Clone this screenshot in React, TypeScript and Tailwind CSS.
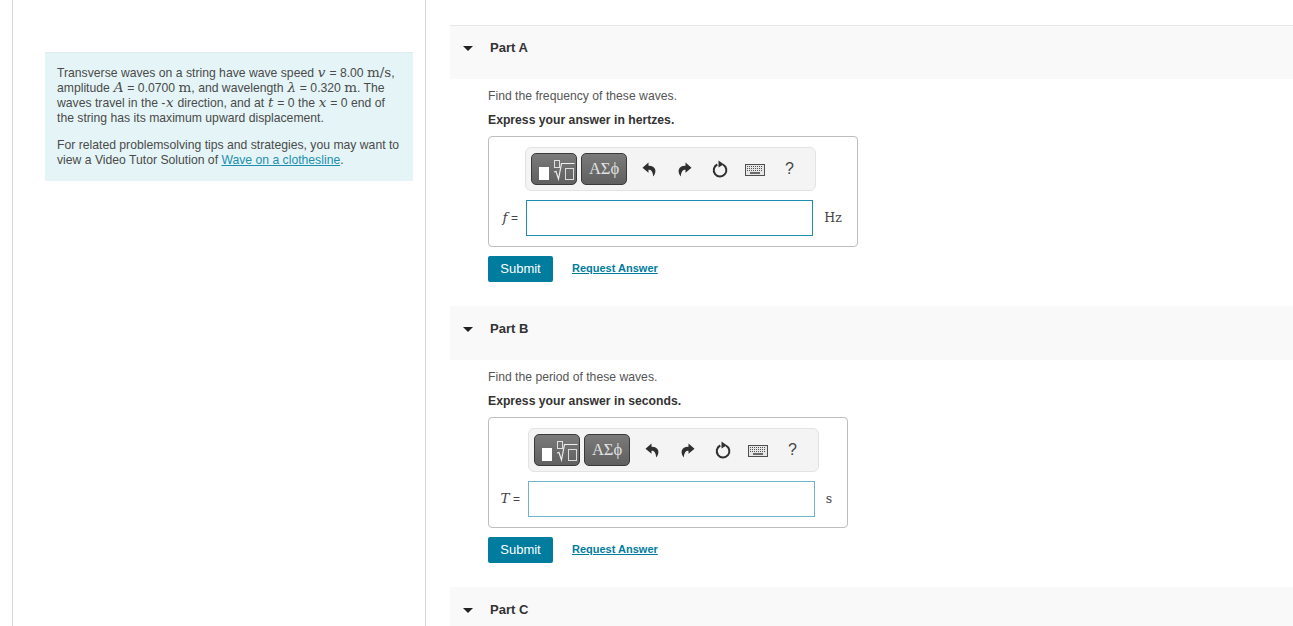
const sans = "font-['Liberation_Sans',Arial,sans-serif]"

const Mi = ({ children }: { children: React.ReactNode }) => (
  <i className="font-['DejaVu_Serif',serif] text-[13.5px] leading-none px-[0.5px]">{children}</i>
)
const Mu = ({ children }: { children: React.ReactNode }) => (
  <span className="font-['DejaVu_Serif',serif] text-[13.5px] leading-none">{children}</span>
)

function TemplatesIcon() {
  return (
    <svg width="44" height="30" viewBox="0 0 44 30" className="shrink-0">
      <rect x="7" y="13" width="10" height="13" fill="#fff" />
      <rect x="22.500" y="6.500" width="5" height="7" fill="none" stroke="#e0e0e0" />
      <path d="M22 18l2-.5 2.500 7.500L29.500 9.500h13" fill="none" stroke="#efefef" strokeWidth="1.200" />
      <rect x="33.500" y="14.500" width="8" height="11" fill="none" stroke="#dcdcdc" />
    </svg>
  )
}

function UndoIcon({ flip }: { flip?: boolean }) {
  return (
    <svg width="14" height="15" viewBox="0 0 14 15" className={flip ? "-scale-x-100" : ""}>
      <path d="M6.500 0.500L0.500 5.800 6.500 10.800V7.800c2.800 0 4.200 1.700 4.700 6.700 1.900-2.300 2.600-4.800 2-6.900C12.500 4.900 10 3.600 6.500 3.700z" fill="#2f2f2f" />
    </svg>
  )
}

function ResetIcon() {
  return (
    <svg width="16" height="18" viewBox="0 0 16 18">
      <path d="M5.300 4.500A6.300 6.300 0 1 0 11 4.600" fill="none" stroke="#2f2f2f" strokeWidth="2" />
      <path d="M6.500 0.500L11.800 4.300 6.500 7.500z" fill="#2f2f2f" />
    </svg>
  )
}

function KeyboardIcon() {
  return (
    <svg width="20" height="12" viewBox="0 0 20 12" className="translate-y-[1px]">
      <rect x="0.500" y="0.500" width="19" height="11" fill="#e6e6e6" stroke="#4f4f4f" />
      <path d="M2 2.500h16M2 4.500h16M2 6.500h16" stroke="#555" strokeWidth="1" strokeDasharray="1 1" />
      <rect x="5" y="8" width="10" height="2" fill="#6a6a6a" />
    </svg>
  )
}

function Toolbar({ offset }: { offset: string }) {
  const darkBtn =
    "w-[46px] h-[32px] rounded-[5px] border border-[#3a3a3a] bg-gradient-to-b from-[#7a7a7a] to-[#606060] flex items-center justify-center"
  return (
    <div className={`${offset} w-[291px] h-[44px] rounded-[6px] border border-[#e3e3e3] bg-[#f4f4f4] flex items-center pl-[5px]`}>
      <div className={darkBtn}>
        <TemplatesIcon />
      </div>
      <div className={`${darkBtn} ml-[4px] font-['Liberation_Serif',serif] text-[16.5px] text-[#e2e2e2]`}>ΑΣϕ</div>
      <div className="ml-[15px] w-[14px] flex justify-center">
        <UndoIcon />
      </div>
      <div className="ml-[22px] w-[14px] flex justify-center">
        <UndoIcon flip />
      </div>
      <div className="ml-[20px] w-[16px] flex justify-center">
        <ResetIcon />
      </div>
      <div className="ml-[17px] w-[20px] flex justify-center">
        <KeyboardIcon />
      </div>
      <div className={`ml-[20px] text-[16px] text-[#444] ${sans}`}>?</div>
    </div>
  )
}

function PartHeader({ name, border }: { name: string; border?: boolean }) {
  return (
    <div className={`h-[54px] bg-[#f9f9f9] flex items-start ${border ? "border-t border-[#e8e8e8] pt-[14px]" : "pt-[15px]"}`}>
      <div className="w-[40px] h-[16px] flex items-center justify-end pr-[17px]">
        <div className="w-0 h-0 border-l-[5px] border-r-[5px] border-t-[5px] border-l-transparent border-r-transparent border-t-[#222]" />
      </div>
      <span className="text-[13px] leading-[16px] font-bold text-[#333]">{name}</span>
    </div>
  )
}

type PartProps = {
  name: string
  question: string
  express: string
  variable: string
  unit: string
  boxWidth: string
  labelWidth: string
  toolbarOffset: string
  unitWidth: string
  inputBorder: string
  border?: boolean
}

function Part(p: PartProps) {
  return (
    <section>
      <PartHeader name={p.name} border={p.border} />
      <div className="pl-[38px] h-[227px]">
        <p className="pt-[10px] text-[12.2px] leading-[15px] text-[#555]">{p.question}</p>
        <p className="mt-[9px] text-[12.2px] leading-[15px] font-bold text-[#333]">{p.express}</p>
        <div className={`mt-[8px] h-[111px] ${p.boxWidth} rounded-[4px] border border-[#bdbdbd] pt-[10px]`}>
          <Toolbar offset={p.toolbarOffset} />
          <div className="mt-[9px] flex items-center">
            <div className={`${p.labelWidth} pr-[8px] text-right text-[12px] text-[#444]`}>
              <span className="mr-[3px]">
                <Mi>{p.variable}</Mi>
              </span>
              =
            </div>
            <div className={`w-[287px] h-[36px] border ${p.inputBorder} bg-white`} />
            <div className={`${p.unitWidth} text-center font-['DejaVu_Serif',serif] text-[12.5px] text-[#444]`}>{p.unit}</div>
          </div>
        </div>
        <div className="mt-[9px] flex items-center">
          <button className="w-[65px] h-[26px] rounded-[2px] bg-[#007c9e] text-white text-[13px]">Submit</button>
          <a className="ml-[19px] mb-[2px] text-[11px] font-bold text-[#007c9e] underline">Request Answer</a>
        </div>
      </div>
    </section>
  )
}

export default function App() {
  return (
    <div className={`h-[626px] overflow-hidden bg-white flex ${sans}`}>
      <aside className="ml-[12px] w-[414px] shrink-0 border-x border-[#d3d7dc] pt-[52px] pl-[32px]">
        <div className="w-[368px] h-[129px] bg-[#e5f5f7] border-t border-[#dfeef0] px-[12px] pt-[13px] text-[12.2px] leading-[15px] text-[#4a4a4a]">
          <p>
            Transverse waves on a string have wave speed <Mi>v</Mi> = 8.00 <Mu>m/s</Mu>,
            <br />
            amplitude <Mi>A</Mi> = 0.0700 <Mu>m</Mu>, and wavelength <Mi>λ</Mi> = 0.320 <Mu>m</Mu>. The
            <br />
            waves travel in the -<Mi>x</Mi> direction, and at <Mi>t</Mi> = 0 the <Mi>x</Mi> = 0 end of
            <br />
            the string has its maximum upward displacement.
          </p>
          <p className="mt-[12px]">
            For related problemsolving tips and strategies, you may want to
            <br />
            view a Video Tutor Solution of <a className="text-[#1c8fb0] underline">Wave on a clothesline</a>.
          </p>
        </div>
      </aside>
      <main className="ml-[24px] flex-1 pt-[25px]">
        <Part
          name="Part A"
          question="Find the frequency of these waves."
          express="Express your answer in hertzes."
          variable="f"
          unit="Hz"
          boxWidth="w-[370px]"
          labelWidth="w-[37px]"
          toolbarOffset="ml-[36px]"
          unitWidth="w-[40px]"
          inputBorder="border-[#1c8fb0]"
          border
        />
        <Part
          name="Part B"
          question="Find the period of these waves."
          express="Express your answer in seconds."
          variable="T"
          unit="s"
          boxWidth="w-[360px]"
          labelWidth="w-[39px]"
          toolbarOffset="ml-[39px]"
          unitWidth="w-[28px]"
          inputBorder="border-[#6fb5c8]"
        />
        <PartHeader name="Part C" />
      </main>
    </div>
  )
}
